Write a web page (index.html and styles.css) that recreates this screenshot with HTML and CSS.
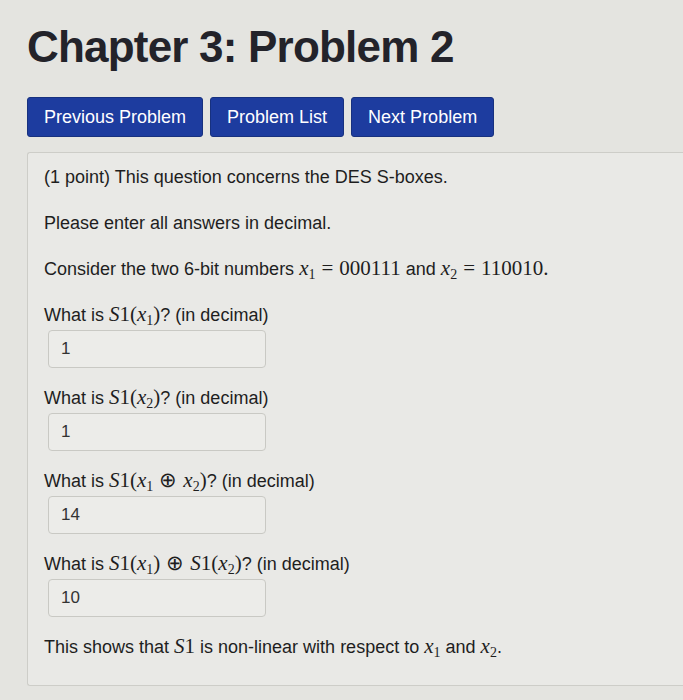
FILE: index.html
```html
<!DOCTYPE html>
<html lang="en">
<head>
    <meta charset="UTF-8">
    <title>Chapter 3: Problem 2</title>
    <link rel="stylesheet" href="styles.css">
</head>
<body>
    <h1 class="title">Chapter 3: Problem 2</h1>

    <div class="navButtons">
        <button class="navButton">Previous Problem</button>
        <button class="navButton">Problem List</button>
        <button class="navButton">Next Problem</button>
    </div>

    <div class="problem">
        <p>(1 point) This question concerns the DES S-boxes.</p>
        <p>Please enter all answers in decimal.</p>
        <p>Consider the two 6-bit numbers <span class="m"><i>x</i><sub>1</sub><span class="op">=</span>000111</span> and <span class="m"><i>x</i><sub>2</sub><span class="op">=</span>110010.</span></p>

        <div class="question">
            <p>What is <span class="m"><i>S</i>1(<i>x</i><sub>1</sub>)</span>? (in decimal)</p>
            <div class="answer">1</div>
        </div>
        <div class="question">
            <p>What is <span class="m"><i>S</i>1(<i>x</i><sub>2</sub>)</span>? (in decimal)</p>
            <div class="answer">1</div>
        </div>
        <div class="question">
            <p>What is <span class="m"><i>S</i>1(<i>x</i><sub>1</sub><span class="op">⊕</span><i>x</i><sub>2</sub>)</span>? (in decimal)</p>
            <div class="answer">14</div>
        </div>
        <div class="question">
            <p>What is <span class="m"><i>S</i>1(<i>x</i><sub>1</sub>)<span class="op">⊕</span><i>S</i>1(<i>x</i><sub>2</sub>)</span>? (in decimal)</p>
            <div class="answer">10</div>
        </div>

        <p class="last">This shows that <span class="m"><i>S</i>1</span> is non-linear with respect to <span class="m"><i>x</i><sub>1</sub></span> and <span class="m"><i>x</i><sub>2</sub></span>.</p>
    </div>
</body>
</html>
```

FILE: styles.css
```css
* {
    margin: 0;
    padding: 0;
    box-sizing: border-box;
}
body {
    background: #e4e4e0;
    font-family: "Liberation Sans", Arial, sans-serif;
    color: #1e1e1e;
    padding: 22px 0 0 27px;
    overflow: hidden;
}
.title {
    font-size: 44px;
    line-height: 50px;
    font-weight: bold;
    letter-spacing: -0.8px;
    color: #23232a;
}
.navButtons {
    display: flex;
    gap: 7px;
    margin-top: 25px;
}
.navButton {
    height: 40px;
    padding: 0 16px;
    font-family: "Liberation Sans", Arial, sans-serif;
    font-size: 18px;
    color: #fff;
    background: #1d3c9f;
    border: 1px solid #17317f;
    border-radius: 3px;
}
.problem {
    margin-top: 15px;
    background: #e9e9e6;
    border: 1px solid #cdcdc8;
    border-right: none;
    border-radius: 3px 0 0 3px;
    padding: 11px 0 25px 16px;
    font-size: 18px;
}
.problem p {
    line-height: 26px;
    margin-bottom: 20px;
}
.question {
    margin-bottom: 17px;
}
.question p {
    margin-bottom: 2px;
}
.answer {
    margin-left: 4px;
    width: 218px;
    height: 38px;
    padding: 0 12px;
    line-height: 36px;
    font-size: 17px;
    color: #333;
    background: #ecece9;
    border: 1px solid #c9c9c4;
    border-radius: 4px;
}
.problem p.last {
    margin-bottom: 0;
}
.m {
    font-family: "Liberation Serif", "Times New Roman", serif;
    font-size: 21px;
    line-height: 1;
}
.m sub {
    font-size: 14px;
    vertical-align: -4px;
    line-height: 0;
}
.op {
    margin: 0 6px;
}
```
